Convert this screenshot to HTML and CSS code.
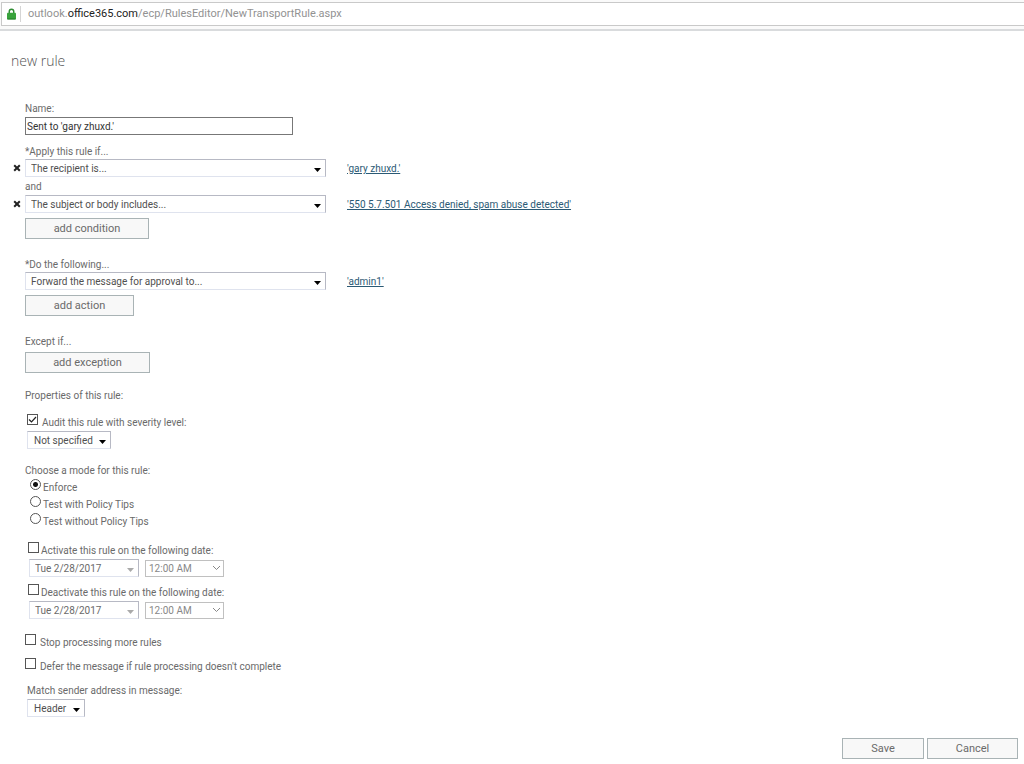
FILE: index.html
```
<!DOCTYPE html>
<html lang="en">
<head>
<meta charset="utf-8">
<title>new rule</title>
<link rel="stylesheet" href="styles.css">
</head>
<body>
<header class="address-bar">
  <div class="address-box">
    <svg class="lock" viewBox="0 0 10 12" aria-hidden="true"><path d="M2.500 6V3.200a2.500 2.500 0 0 1 5 0V6" fill="none" stroke="#2f8c33" stroke-width="1.600"/><rect x="0" y="4.500" width="10" height="7.500" rx="1" fill="#39a33c"/><path d="M.5 11.500h9" stroke="#267c2b"/></svg>
    <span class="divider"></span>
    <span class="url">outlook.<span class="domain">office365.com</span>/ecp/RulesEditor/NewTransportRule.aspx</span>
  </div>
</header>
<main>
  <h1 class="title">new rule</h1>
  <form class="form">
    <section class="group name-group">
      <label class="label" for="name">Name:</label>
      <input class="text-input" id="name" type="text" value="Sent to 'gary zhuxd.'">
    </section>

    <section class="group conditions">
      <label class="label" for="cond1">*Apply this rule if...</label>
      <div class="rule-row">
        <button class="remove" type="button" aria-label="Remove condition"><svg viewBox="0 0 8 8"><path d="M1.200 1.200l5.600 5.600M6.800 1.200L1.200 6.800"/></svg></button>
        <select class="select wide" id="cond1"><option>The recipient is...</option></select>
        <a class="link" href="#">'gary zhuxd.'</a>
      </div>
      <label class="label joiner" for="cond2">and</label>
      <div class="rule-row">
        <button class="remove" type="button" aria-label="Remove condition"><svg viewBox="0 0 8 8"><path d="M1.200 1.200l5.600 5.600M6.800 1.200L1.200 6.800"/></svg></button>
        <select class="select wide" id="cond2"><option>The subject or body includes...</option></select>
        <a class="link" href="#">'550 5.7.501 Access denied, spam abuse detected'</a>
      </div>
      <button class="button add add-condition" type="button">add condition</button>
    </section>

    <section class="group actions">
      <label class="label" for="action">*Do the following...</label>
      <div class="rule-row">
        <span></span>
        <select class="select wide" id="action"><option>Forward the message for approval to...</option></select>
        <a class="link" href="#">'admin1'</a>
      </div>
      <button class="button add add-action" type="button">add action</button>
    </section>

    <section class="group exceptions">
      <span class="label">Except if...</span>
      <button class="button add add-exception" type="button">add exception</button>
    </section>

    <section class="group properties">
      <span class="label">Properties of this rule:</span>
      <label class="choice audit"><input type="checkbox" checked><span>Audit this rule with severity level:</span></label>
      <select class="select severity" aria-label="Severity level"><option>Not specified</option></select>
    </section>

    <fieldset class="group modes">
      <legend class="label">Choose a mode for this rule:</legend>
      <label class="choice"><input type="radio" name="mode" checked><span>Enforce</span></label>
      <label class="choice"><input type="radio" name="mode"><span>Test with Policy Tips</span></label>
      <label class="choice"><input type="radio" name="mode"><span>Test without Policy Tips</span></label>
    </fieldset>

    <section class="group schedule">
      <label class="choice"><input type="checkbox"><span>Activate this rule on the following date:</span></label>
      <div class="date-row">
        <select class="select date" aria-label="Activation date" disabled><option>Tue 2/28/2017</option></select>
        <select class="select time" aria-label="Activation time" disabled><option>12:00 AM</option></select>
      </div>
      <label class="choice"><input type="checkbox"><span>Deactivate this rule on the following date:</span></label>
      <div class="date-row">
        <select class="select date" aria-label="Deactivation date" disabled><option>Tue 2/28/2017</option></select>
        <select class="select time" aria-label="Deactivation time" disabled><option>12:00 AM</option></select>
      </div>
    </section>

    <section class="group processing">
      <label class="choice"><input type="checkbox"><span>Stop processing more rules</span></label>
      <label class="choice"><input type="checkbox"><span>Defer the message if rule processing doesn't complete</span></label>
    </section>

    <section class="group matching">
      <label class="label" for="match">Match sender address in message:</label>
      <select class="select header" id="match"><option>Header</option></select>
    </section>

    <footer class="footer">
      <button class="button save" type="button">Save</button>
      <button class="button cancel" type="button">Cancel</button>
    </footer>
  </form>
</main>
</body>
</html>
```
FILE: styles.css
```
* { box-sizing: border-box; }
body {
  margin: 0;
  background: #fff;
  color: #6a6a6a;
  font: 10px/16px Roboto, "Open Sans", sans-serif;
}
button, input, select { margin: 0; font: inherit; color: inherit; }

.address-bar { padding: 2px 0 3px 1px; border-bottom: 2px solid #d9dbdd; background: #fafafa; }
.address-box {
  display: flex;
  align-items: center;
  height: 24px;
  padding-left: 5px;
  border: 1px solid #c9c9c9;
  border-right: 0;
  background: #fff;
}
.lock { width: 9px; height: 12px; }
.divider { width: 1px; height: 16px; margin: 0 7px 0 4px; background: #d5d5d5; }
.url { font-size: 11px; color: #929292; }
.domain { color: #222; }

.title { margin: 20px 0 0 11px; font-family: "Open Sans", sans-serif; font-size: 14px; line-height: 20px; font-weight: 300; color: #555; }

.form { padding: 29px 6px 5px 25px; }
.group { display: flex; flex-direction: column; align-items: flex-start; margin: 0; padding: 0; border: 0; }
.label { display: block; padding: 1px 0 0; line-height: 15px; }

.text-input {
  width: 268px;
  height: 18px;
  margin-top: 1px;
  padding: 0 1px;
  border: 1px solid #777;
  background: #fff;
  color: #333;
}

.conditions { margin-top: 8px; }
.rule-row { display: grid; grid-template-columns: 12px 301px auto; align-items: center; margin-left: -12px; }
.remove { display: flex; width: 8px; height: 8px; padding: 0; border: 0; background: none; }
.remove svg { width: 8px; height: 8px; fill: none; stroke: #222; stroke-width: 2; }
.joiner { line-height: 17px; }
.link { margin-left: 21px; padding-top: 1px; color: #2b5a75; line-height: 17px; }

.select {
  height: 18px;
  padding: 1px 5px 0;
  border: 1px solid #dfe3ee;
  border-top-color: #b7b9c4;
  border-right-color: #b7b9c4;
  border-radius: 0;
  appearance: none;
  color: #505050;
  line-height: 15px;
  opacity: 1;
  background: #fff url("data:image/svg+xml,%3Csvg xmlns='http://www.w3.org/2000/svg' width='7' height='4'%3E%3Cpath d='M0 0h7L3.500 4z' fill='%23000'/%3E%3C/svg%3E") no-repeat right 4px top 8px;
}
.wide { width: 301px; }

.button {
  height: 21px;
  padding: 1px 0 0;
  border: 1px solid #a9b3b5;
  border-radius: 0;
  background: #f8f8f8;
  color: #6a6a6a;
  font-size: 11px;
  line-height: 18px;
}
.add-condition { width: 124px; margin-top: 5px; }
.add-action { width: 109px; margin-top: 5px; }
.add-exception { width: 125px; margin-top: 3px; }
.actions, .exceptions { margin-top: 17px; }
.properties { margin-top: 14px; }

.choice { display: flex; align-items: flex-start; gap: 2px; line-height: 16px; }
.choice input {
  flex: none;
  width: 11px;
  height: 11px;
  border: 1px solid #555;
  background: #fff;
  appearance: none;
}
.choice input[type="radio"] { border-radius: 50%; }
.choice input[type="radio"]:checked { background: radial-gradient(circle, #111 0 2px, #fff 3px); }
.choice input[type="checkbox"]:checked {
  background: url("data:image/svg+xml,%3Csvg xmlns='http://www.w3.org/2000/svg' width='9' height='9'%3E%3Cpath d='M1 4.500l2.500 2.500L8 2' fill='none' stroke='%23222' stroke-width='1.200'/%3E%3C/svg%3E") center no-repeat;
}
.choice span { padding-top: 1px; line-height: 15px; }
.audit { gap: 4px; margin: 11px 0 1px 2px; }
.severity { width: 84px; margin-left: 2px; padding-left: 6px; background-position: right 4px top 8px; }

.modes { display: block; margin-top: 13px; }
.modes .choice { padding-left: 5px; padding-top: 1px; }

.schedule { margin-top: 13px; padding-left: 3px; }
.date-row { display: flex; align-items: center; gap: 6px; margin: 1px 0 7px; }
.date {
  width: 110px;
  margin-left: 1px;
  color: #6a6a6a;
  background-image: url("data:image/svg+xml,%3Csvg xmlns='http://www.w3.org/2000/svg' width='7' height='4'%3E%3Cpath d='M0 0h7L3.500 4z' fill='%23aaa'/%3E%3C/svg%3E");
}
.time {
  width: 79px;
  height: 17px;
  padding: 0 3px;
  border-color: #c0c0c0;
  color: #888;
  line-height: 15px;
  background-image: url("data:image/svg+xml,%3Csvg xmlns='http://www.w3.org/2000/svg' width='9' height='5'%3E%3Cpath d='M1 0l3.500 3.500L8 0' fill='none' stroke='%23888'/%3E%3C/svg%3E");
  background-position: right 2px top 5px;
}

.processing { gap: 8px; margin-top: 8px; }
.processing .choice { gap: 4px; }
.matching { margin-top: 8px; padding-left: 2px; }
.header { width: 58px; margin-top: 1px; padding-left: 6px; }

.footer { display: flex; justify-content: flex-end; gap: 3px; margin-top: 21px; }
.save { width: 82px; }
.cancel { width: 91px; }
```
